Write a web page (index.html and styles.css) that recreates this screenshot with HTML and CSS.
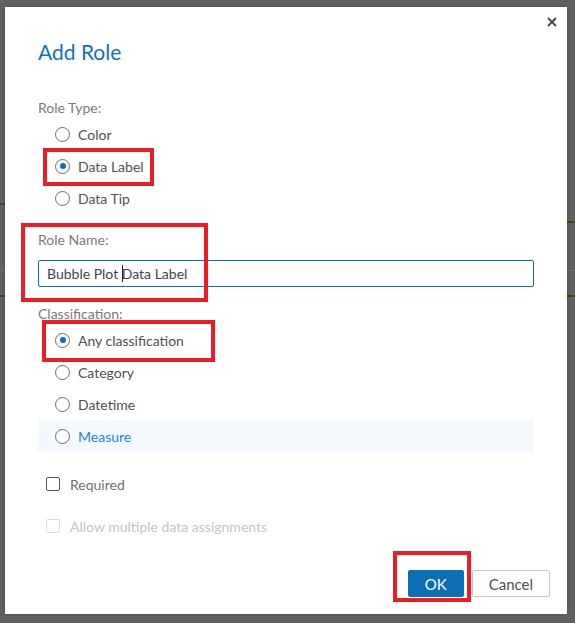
FILE: index.html
```html
<!DOCTYPE html>
<html lang="en">
<head>
<meta charset="utf-8">
<title>Add Role</title>
<link rel="stylesheet" href="styles.css">
</head>
<body>
<div class="dialog">
  <button class="close" aria-label="Close">
    <svg width="10" height="10" viewBox="0 0 10 10"><path d="M1 1L9 9M9 1L1 9" stroke="#444" stroke-width="1.8" fill="none"/></svg>
  </button>
  <h1 class="title">Add Role</h1>

  <div class="field-label first">Role Type:</div>
  <div class="options">
    <div class="option"><span class="radio"></span><span>Color</span></div>
    <div class="option"><span class="radio checked"></span><span>Data Label</span></div>
    <div class="option"><span class="radio"></span><span>Data Tip</span></div>
  </div>

  <div class="field-label name-label">Role Name:</div>
  <div class="text-input">Bubble Plot <span class="caret"></span>Data Label</div>

  <div class="field-label class-label">Classification:</div>
  <div class="options">
    <div class="option"><span class="radio checked"></span><span>Any classification</span></div>
    <div class="option"><span class="radio"></span><span>Category</span></div>
    <div class="option"><span class="radio"></span><span>Datetime</span></div>
    <div class="option hover"><span class="radio"></span><span>Measure</span></div>
  </div>

  <div class="checks">
    <div class="check"><span class="box"></span><span>Required</span></div>
    <div class="check disabled"><span class="box"></span><span>Allow multiple data assignments</span></div>
  </div>

  <div class="footer">
    <button class="btn primary">OK</button>
    <button class="btn">Cancel</button>
  </div>
</div>

<div class="mark mark-datalabel"></div>
<div class="mark mark-rolename"></div>
<div class="mark mark-anyclass"></div>
<div class="mark mark-ok"></div>
</body>
</html>
```

FILE: styles.css
```css
html, body {
  margin: 0;
  padding: 0;
}

body {
  width: 575px;
  height: 623px;
  overflow: hidden;
  font-family: Lato, "Open Sans", "Liberation Sans", sans-serif;
  font-size: 14px;
  color: #505050;
  background-color: #606060;
  background-image:
    linear-gradient(#5a3810, #5a3810),
    linear-gradient(#5a3810, #5a3810),
    linear-gradient(#6e6e6e, #6e6e6e),
    linear-gradient(#5a3810, #5a3810),
    linear-gradient(#5a3810, #5a3810),
    linear-gradient(#6e6e6e, #6e6e6e);
  background-repeat: no-repeat;
  background-size: 5px 2px, 5px 2px, 5px 1px, 8px 2px, 8px 2px, 8px 1px;
  background-position:
    0 203px, 0 295px, 0 270px,
    567px 221px, 567px 295px, 567px 270px;
}

.dialog {
  position: relative;
  box-sizing: border-box;
  width: 562px;
  height: 607px;
  margin: 7px 0 0 5px;
  padding: 33px 33px 17px 33px;
  background: #ffffff;
  box-shadow: 0 0 3px rgba(0, 0, 0, 0.25);
  display: flex;
  flex-direction: column;
}

.close {
  position: absolute;
  top: 10px;
  right: 10px;
  width: 10px;
  height: 10px;
  padding: 0;
  border: 0;
  background: none;
  display: flex;
}

.title {
  margin: 0;
  font-size: 21px;
  line-height: 24px;
  font-weight: 400;
  color: #0b72c0;
}

.field-label {
  line-height: 20px;
  color: #7a7a7a;
}

.field-label.first {
  margin-top: 34px;
}

.field-label.name-label {
  margin-top: 16px;
}

.field-label.class-label {
  margin-top: 17px;
}

.options {
  display: flex;
  flex-direction: column;
}

.option {
  height: 32px;
  display: flex;
  align-items: center;
  gap: 8px;
  padding-left: 17px;
  color: #505050;
}

.option.hover {
  background: #f4f9fe;
  color: #1a8ae0;
}

.radio {
  box-sizing: border-box;
  width: 15px;
  height: 15px;
  border: 1px solid #6e6e6e;
  border-radius: 50%;
  display: flex;
  align-items: center;
  justify-content: center;
  background: #fff;
}

.radio.checked::after {
  content: "";
  width: 6px;
  height: 6px;
  border-radius: 50%;
  background: #0a6fc2;
}

.text-input {
  box-sizing: border-box;
  margin-top: 10px;
  height: 27px;
  border: 1px solid #0e6fb3;
  border-radius: 2px;
  padding-left: 8px;
  display: flex;
  align-items: center;
  white-space: pre;
  color: #444444;
}

.caret {
  display: inline-block;
  width: 1px;
  height: 17px;
  margin-right: -1px;
  background: #222;
}

.checks {
  margin-top: 11px;
  display: flex;
  flex-direction: column;
}

.check {
  height: 42px;
  display: flex;
  align-items: center;
  gap: 10px;
  padding-left: 8px;
  color: #707070;
}

.box {
  box-sizing: border-box;
  width: 14px;
  height: 14px;
  border: 1.5px solid #555555;
  border-radius: 2px;
}

.check.disabled {
  color: #c4c4c4;
}

.check.disabled .box {
  border: 1px solid #dddddd;
}

.footer {
  margin-top: auto;
  margin-right: -16px;
  display: flex;
  justify-content: flex-end;
  gap: 8px;
}

.btn {
  box-sizing: border-box;
  height: 27px;
  padding: 0 16px;
  font-family: inherit;
  font-size: 15px;
  color: #505050;
  background: #ffffff;
  border: 1px solid #c8c8c8;
  border-radius: 2px;
}

.btn.primary {
  min-width: 55px;
  background: #0b6fb5;
  border-color: #0b6fb5;
  color: #ffffff;
}

.mark {
  position: absolute;
  box-sizing: border-box;
  border: 4px solid #ed1c24;
}

.mark-datalabel {
  left: 43px;
  top: 148px;
  width: 111px;
  height: 38px;
}

.mark-rolename {
  left: 21px;
  top: 223px;
  width: 187px;
  height: 79px;
}

.mark-anyclass {
  left: 42px;
  top: 320px;
  width: 173px;
  height: 42px;
}

.mark-ok {
  left: 393px;
  top: 551px;
  width: 78px;
  height: 51px;
}
```
